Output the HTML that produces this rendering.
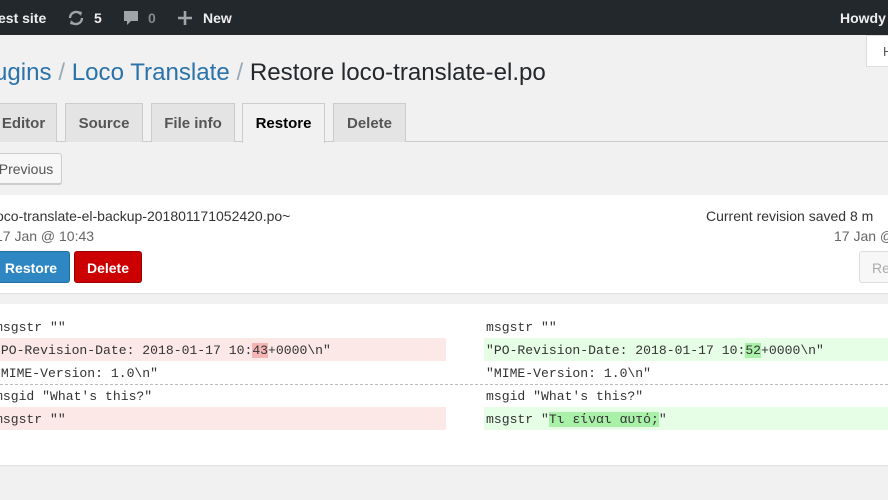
<!DOCTYPE html>
<html><head><meta charset="utf-8"><style>
*{box-sizing:border-box;margin:0;padding:0}
body{width:888px;height:500px;overflow:hidden;background:#f1f1f1;font-family:"Liberation Sans",sans-serif;position:relative;color:#23282d}
.bar{position:absolute;left:0;top:0;width:888px;height:35px;background:#23282d;color:#eee;font-size:14px;font-weight:bold}
.bar span{position:absolute;top:10px}
.abs{position:absolute}
h1{position:absolute;left:-6px;top:59px;font-size:24.1px;font-weight:normal;color:#23282d;white-space:nowrap}
h1 a{color:#2a73aa}
h1 .s{color:#9aa9b6}
.tab{position:absolute;top:103px;height:39px;border:1px solid #ccc;border-bottom:none;background:#e4e4e4;color:#555;font-size:15px;font-weight:bold;padding-top:11px;text-align:center}
.tab.on{background:#f1f1f1;color:#000;height:40px}
.line{position:absolute;left:0;top:141px;width:888px;height:1px;background:#ccc}
.btn{position:absolute;border-radius:3px;font-size:14px;text-align:center}
.panel{position:absolute;left:0;width:888px;background:#fff;box-shadow:0 1px 1px rgba(0,0,0,.08)}
.mono{font-family:"Liberation Mono","DejaVu Sans Mono",monospace;font-size:13.1px;color:#333;white-space:pre}
.row{position:absolute;height:23px;padding-top:5px}
</style></head><body>
<div class="bar">
<span style="left:-2px">est site</span>
<svg class="abs" style="left:66px;top:9px" width="20" height="18" viewBox="0 0 20 18"><path d="M4 9a6 6 0 0 1 10.5-4M16 9a6 6 0 0 1-10.5 4" stroke="#a0a5aa" stroke-width="2.4" fill="none"/><path d="M12 2l4 1-1 4zM8 16l-4-1 1-4z" fill="#a0a5aa"/></svg>
<span style="left:94px">5</span>
<svg class="abs" style="left:122px;top:10px" width="18" height="17" viewBox="0 0 18 17"><path d="M2 1h14v10h-7l-4 4v-4H2z" fill="#a0a5aa"/></svg>
<span style="left:148px;color:#888">0</span>
<svg class="abs" style="left:178px;top:11px" width="14" height="14"><path d="M7 0v14M0 7h14" stroke="#a0a5aa" stroke-width="2.6"/></svg>
<span style="left:203px">New</span>
<span style="left:840px">Howdy</span>
</div>
<div class="abs" style="left:866px;top:35px;width:30px;height:32px;background:#fff;border:1px solid #ddd;font-size:13px;color:#555;padding:8px 0 0 16px">H</div>
<h1><a>ugins</a> <span class="s">/</span> <a>Loco Translate</a> <span class="s">/</span> Restore loco-translate-el.po</h1>
<div class="line"></div>
<div class="tab" style="left:-10px;width:67px">Editor</div>
<div class="tab" style="left:65px;width:78px">Source</div>
<div class="tab" style="left:151px;width:84px">File info</div>
<div class="tab on" style="left:242px;width:83px">Restore</div>
<div class="tab" style="left:333px;width:73px">Delete</div>
<div class="btn" style="left:-10px;top:153px;width:72px;height:31px;background:#f7f7f7;border:1px solid #ccc;color:#555;padding-top:7px;box-shadow:0 1px 0 #ccc">Previous</div>
<div class="panel" style="top:195px;height:98px"></div>
<div class="abs" style="left:-4px;top:208px;font-size:14px;color:#333">oco-translate-el-backup-201801171052420.po~</div>
<div class="abs" style="left:-5px;top:228px;font-size:14px;color:#666">17 Jan @ 10:43</div>
<div class="btn" style="left:-8px;top:251px;width:78px;height:32px;background:#2e87c3;border:1px solid #1f6e9e;color:#fff;font-weight:bold;padding-top:8px">Restore</div>
<div class="btn" style="left:74px;top:251px;width:68px;height:32px;background:#c00;border:1px solid #900;color:#fff;font-weight:bold;padding-top:8px">Delete</div>
<div class="abs" style="left:706px;top:208px;font-size:14px;color:#333;white-space:nowrap">Current revision saved 8 m</div>
<div class="abs" style="left:834px;top:228px;font-size:14px;color:#666;white-space:nowrap">17 Jan @</div>
<div class="btn" style="left:859px;top:251px;width:40px;height:32px;background:#f7f7f7;border:1px solid #ddd;color:#aaa;padding-top:8px;text-align:left;padding-left:12px">Re</div>
<div class="panel" style="top:304px;height:161px"></div>
<div class="mono">
<div class="row" style="left:-5px;top:315px">msgstr ""</div>
<div class="row" style="left:0;top:338px;width:446px;background:#fde8e8;padding-left:0;text-indent:-7px">"PO-Revision-Date: 2018-01-17 10:<span style="background:#f4b5b5">43</span>+0000\n"</div>
<div class="row" style="left:-7px;top:361px">"MIME-Version: 1.0\n"</div>
<div class="row" style="left:-5px;top:384px">msgid "What's this?"</div>
<div class="row" style="left:0;top:407px;width:446px;background:#fde8e8;text-indent:-5px">msgstr ""</div>
<div class="row" style="left:484px;top:315px;padding-left:2px">msgstr ""</div>
<div class="row" style="left:484px;top:338px;width:404px;background:#e6fde6;padding-left:2px">"PO-Revision-Date: 2018-01-17 10:<span style="background:#a9f0a9">52</span>+0000\n"</div>
<div class="row" style="left:484px;top:361px;padding-left:2px">"MIME-Version: 1.0\n"</div>
<div class="row" style="left:484px;top:384px;padding-left:2px">msgid "What's this?"</div>
<div class="row" style="left:484px;top:407px;width:404px;background:#e6fde6;padding-left:2px">msgstr "<span style="background:#a9f0a9">Τι είναι αυτό;</span>"</div>
</div>
<div class="abs" style="left:0;top:384px;width:888px;border-top:1px dashed #bbb"></div>
</body></html>
